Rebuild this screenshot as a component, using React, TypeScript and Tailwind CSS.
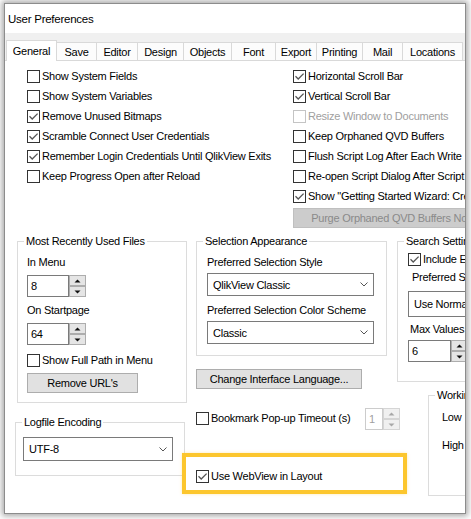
import React from "react";

type Tab = { label: string; w: string };

const tabs: Tab[] = [
  { label: "Save", w: "w-[40px]" },
  { label: "Editor", w: "w-[41px]" },
  { label: "Design", w: "w-[46px]" },
  { label: "Objects", w: "w-[48px]" },
  { label: "Font", w: "w-[44px]" },
  { label: "Export", w: "w-[41px]" },
  { label: "Printing", w: "w-[46px]" },
  { label: "Mail", w: "w-[40px]" },
  { label: "Locations", w: "w-[60px]" },
];

const leftChecks: [string, boolean][] = [
  ["Show System Fields", false],
  ["Show System Variables", false],
  ["Remove Unused Bitmaps", true],
  ["Scramble Connect User Credentials", true],
  ["Remember Login Credentials Until QlikView Exits", true],
  ["Keep Progress Open after Reload", false],
];

const rightChecks: [string, boolean, boolean?][] = [
  ["Horizontal Scroll Bar", true],
  ["Vertical Scroll Bar", true],
  ["Resize Window to Documents", false, true],
  ["Keep Orphaned QVD Buffers", false],
  ["Flush Script Log After Each Write", false],
  ["Re-open Script Dialog After Script Execution", false],
  ['Show "Getting Started Wizard: Create New Document"', true],
];

function Box({ checked, disabled }: { checked?: boolean; disabled?: boolean }) {
  return (
    <span
      className={`flex h-[13px] w-[13px] shrink-0 items-center justify-center border bg-white ${
        disabled ? "border-[#c4c4c4]" : "border-[#333333]"
      }`}
    >
      {checked && (
        <svg width="11" height="11" viewBox="0 0 11 11" className="block">
          <path d="M1.5 5.3 L4.2 8 L9.6 2.6" fill="none" stroke="#555555" strokeWidth="1.3" />
        </svg>
      )}
    </span>
  );
}

function CheckRow({ label, checked, disabled, h = "h-[20px]" }: { label: string; checked?: boolean; disabled?: boolean; h?: string }) {
  return (
    <div className={`flex ${h} items-center gap-[2px] whitespace-nowrap ${disabled ? "text-[#a0a0a0]" : ""}`}>
      <Box checked={checked} disabled={disabled} />
      <span>{label}</span>
    </div>
  );
}

function Arrow({ up, color }: { up?: boolean; color: string }) {
  return (
    <svg width="7" height="4" viewBox="0 0 7 4" className="block">
      <polygon points={up ? "0.5,3.5 3.5,0.5 6.5,3.5" : "0.5,0.5 3.5,3.5 6.5,0.5"} fill={color} />
    </svg>
  );
}

function Spin({ value, input, disabled }: { value: string; input: string; disabled?: boolean }) {
  const btn = `flex h-[11px] w-[17px] items-center justify-center border ${
    disabled ? "border-[#d5d5d5] bg-[#f0f0f0]" : "border-[#adadad] bg-[#e5e5e5]"
  }`;
  const arrow = disabled ? "#a8a8a8" : "#111111";
  return (
    <div className="flex h-[22px] shrink-0">
      <div
        className={`flex ${input} items-center border pl-[3px] ${
          disabled ? "border-[#cccccc] text-[#a0a0a0]" : "border-[#7a7a7a]"
        }`}
      >
        {value}
      </div>
      <div className="flex flex-col">
        <div className={btn}>
          <Arrow up color={arrow} />
        </div>
        <div className={btn}>
          <Arrow color={arrow} />
        </div>
      </div>
    </div>
  );
}

function Select({ value, w, h = "h-[23px]" }: { value: string; w: string; h?: string }) {
  return (
    <div className={`flex ${w} ${h} shrink-0 items-center justify-between border border-[#7a7a7a] bg-white pl-[5px] pr-[5px] whitespace-nowrap`}>
      <span>{value}</span>
      <svg width="8" height="5" viewBox="0 0 8 5" className="block shrink-0">
        <polyline points="0.5,0.5 4,4 7.5,0.5" fill="none" stroke="#555555" strokeWidth="1" />
      </svg>
    </div>
  );
}

function Button({ label, w, disabled }: { label: string; w: string; disabled?: boolean }) {
  return (
    <div
      className={`flex h-[20px] ${w} shrink-0 items-center justify-center border whitespace-nowrap ${
        disabled ? "border-[#bfbfbf] bg-[#cccccc] text-[#8a8a8a]" : "border-[#adadad] bg-[#e1e1e1]"
      }`}
    >
      {label}
    </div>
  );
}

// legend sits at the fieldset's left edge; inner padding goes on the body
function Group({ legend, className, body, children }: { legend: string; className: string; body: string; children: React.ReactNode }) {
  return (
    <fieldset className={`shrink-0 border border-[#dcdcdc] ${className}`}>
      <legend className="ml-[6px] px-[2px] leading-[14px] whitespace-nowrap">{legend}</legend>
      <div className={body}>{children}</div>
    </fieldset>
  );
}

export default function App() {
  return (
    <div className="min-h-screen bg-white pl-[4px] pt-[3px] font-['Liberation_Sans',Arial,sans-serif] text-[11px] leading-[14px] tracking-[-0.25px] text-black">
      <div className="relative h-[511px] w-[462px] overflow-hidden border border-[#8c8c8c] bg-white shadow-[0_0_6px_2px_rgba(0,0,0,0.35)]">
        {/* title bar */}
        <div className="flex h-[29px] items-center pl-[3px] text-[11.5px]">User Preferences</div>

        {/* tab strip */}
        <div className="flex h-[27px] items-end bg-[#f0f0f0] pl-[1px]">
          <div className="relative z-10 -mb-[1px] flex h-[21px] w-[51px] items-center justify-center border border-b-0 border-[#d9d9d9] bg-white pb-[1px]">
            General
          </div>
          {tabs.map((t) => (
            <div
              key={t.label}
              className={`flex h-[18px] ${t.w} items-center justify-center border-t border-r border-[#d9d9d9] bg-[#fcfcfc]`}
            >
              {t.label}
            </div>
          ))}
        </div>

        <div className="border-t border-[#d9d9d9]">
          {/* general options */}
          <div className="flex pt-[5px]">
            <div className="w-[288px] shrink-0 pl-[22px]">
              {leftChecks.map(([label, checked]) => (
                <CheckRow key={label} label={label} checked={checked} />
              ))}
            </div>
            <div className="shrink-0">
              {rightChecks.map(([label, checked, disabled]) => (
                <CheckRow key={label} label={label} checked={checked} disabled={disabled} />
              ))}
              <div className="mt-[2px]">
                <Button label="Purge Orphaned QVD Buffers Now" w="w-[200px]" disabled />
              </div>
            </div>
          </div>

          {/* group boxes */}
          <div className="mt-[6px] flex pl-[12px]">
            <div className="flex w-[170px] shrink-0 flex-col">
              <Group legend="Most Recently Used Files" className="w-[170px]" body="pb-[9px] pl-[9px]">
                <div className="mt-[7px]">In Menu</div>
                <div className="mt-[6px]">
                  <Spin value="8" input="w-[42px]" />
                </div>
                <div className="mt-[6px]">On Startpage</div>
                <div className="mt-[6px]">
                  <Spin value="64" input="w-[42px]" />
                </div>
                <div className="mt-[8px]">
                  <CheckRow label="Show Full Path in Menu" h="h-[14px]" />
                </div>
                <div className="mt-[6px]">
                  <Button label="Remove URL's" w="w-[111px]" />
                </div>
              </Group>
              <Group legend="Logfile Encoding" className="-ml-[2px] mt-[12px] w-[170px]" body="pb-[14px] pl-[7px]">
                <div className="mt-[8px]">
                  <Select value="UTF-8" w="w-[150px]" h="h-[24px]" />
                </div>
              </Group>
            </div>

            <div className="ml-[9px] flex w-[191px] shrink-0 flex-col">
              <Group legend="Selection Appearance" className="w-[191px]" body="pb-[11px] pl-[10px]">
                <div className="mt-[7px]">Preferred Selection Style</div>
                <div className="mt-[4px]">
                  <Select value="QlikView Classic" w="w-[167px]" />
                </div>
                <div className="mt-[7px]">Preferred Selection Color Scheme</div>
                <div className="mt-[4px]">
                  <Select value="Classic" w="w-[167px]" />
                </div>
              </Group>
              <div className="mt-[13px]">
                <Button label="Change Interface Language..." w="w-[166px]" />
              </div>
              <div className="mt-[19px] flex items-start">
                <div className="mt-[3px] w-[169px] shrink-0">
                  <CheckRow label="Bookmark Pop-up Timeout (s)" h="h-[14px]" />
                </div>
                <Spin value="1" input="w-[18px]" disabled />
              </div>
            </div>

            <div className="ml-[10px] flex w-[130px] shrink-0 flex-col">
              <Group legend="Search Settings" className="w-[130px]" body="pb-[19px] pl-[10px]">
                <div className="mt-[4px]">
                  <CheckRow label="Include Excluded Values in Search" checked h="h-[14px]" />
                </div>
                <div className="ml-[4px] mt-[4px] whitespace-nowrap">Preferred Search Mode</div>
                <div className="mt-[7px]">
                  <Select value="Use Normal Search" w="w-[120px]" h="h-[26px]" />
                </div>
                <div className="ml-[2px] mt-[5px] whitespace-nowrap">Max Values in Current</div>
                <div className="mt-[4px]">
                  <Spin value="6" input="w-[43px]" />
                </div>
              </Group>
              <Group legend="Working Set Limits" className="ml-[31px] mt-[6px] w-[120px]" body="pb-[43px] pl-[13px]">
                <div className="mt-[8px]">Low</div>
                <div className="mt-[14px]">High</div>
              </Group>
            </div>
          </div>
        </div>

        {/* highlighted option */}
        <div className="absolute left-[177px] top-[449px] h-[41px] w-[225px] border-4 border-[#fcc62d] bg-white pl-[10px] pt-[12px] shadow-[0_0_3px_rgba(252,198,45,0.35)]">
          <CheckRow label="Use WebView in Layout" checked h="h-[14px]" />
        </div>
      </div>
    </div>
  );
}
